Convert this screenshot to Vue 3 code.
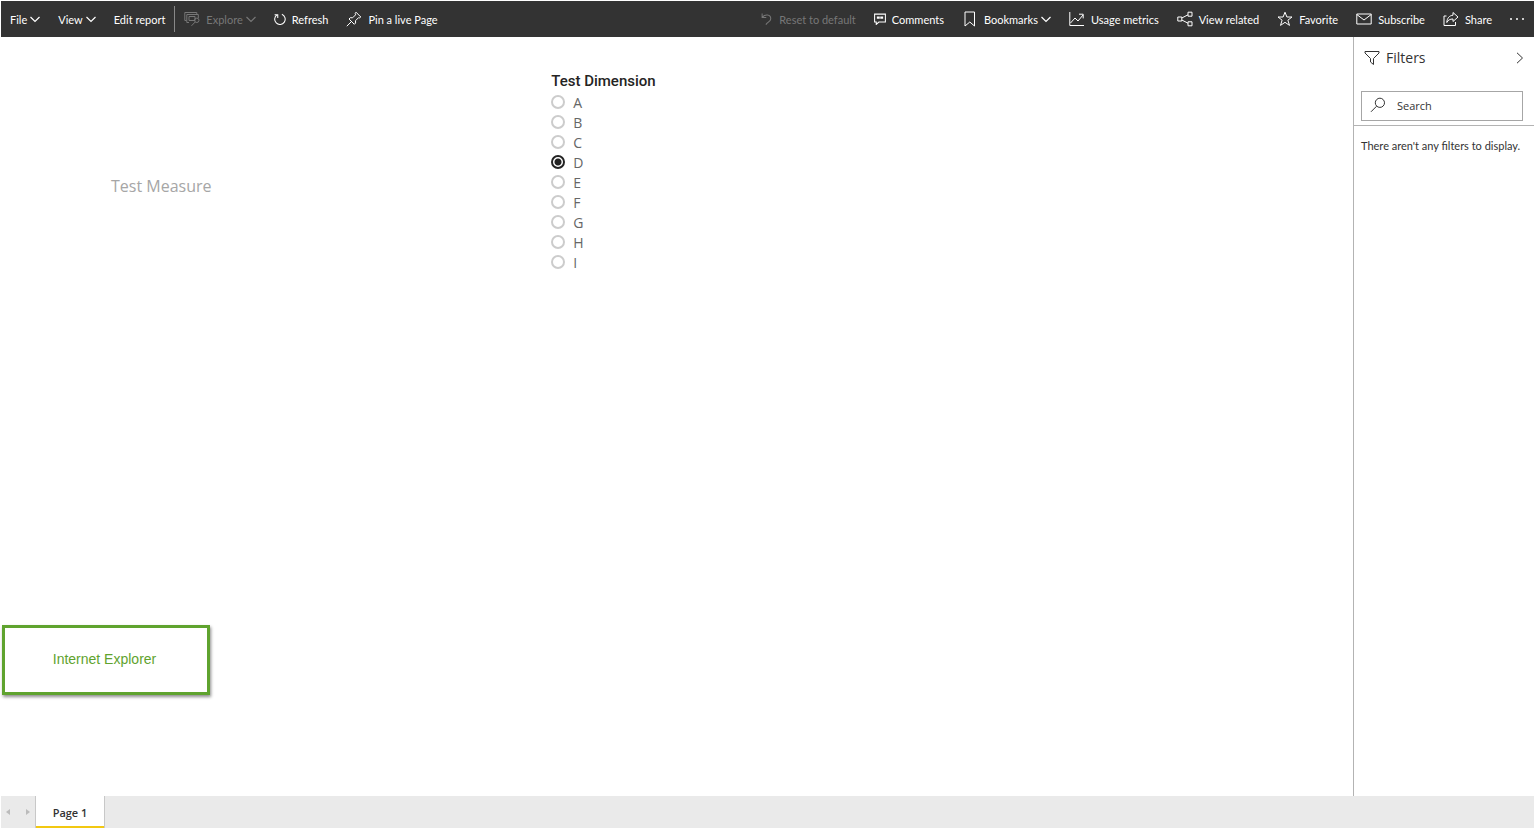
<template>
  <div class="report">
    <header class="toolbar">
      <div class="group">
        <button type="button" class="cmd">
          File
          <svg class="chevron" viewBox="0 0 10 10"><path d="M.5 3 5 7.5 9.500 3" /></svg>
        </button>
        <button type="button" class="cmd">
          View
          <svg class="chevron" viewBox="0 0 10 10"><path d="M.5 3 5 7.5 9.500 3" /></svg>
        </button>
        <button type="button" class="cmd">Edit report</button>
        <span class="divider"></span>
        <button
          v-for="item in leftItems"
          :key="item.label"
          type="button"
          class="cmd"
          :disabled="item.disabled"
        >
          <svg :class="['icon', { small: item.small }]" viewBox="0 0 16 16"><path :d="item.icon" /></svg>
          <span>{{ item.label }}</span>
          <svg v-if="item.menu" class="chevron" viewBox="0 0 10 10"><path d="M.5 3 5 7.5 9.500 3" /></svg>
        </button>
      </div>

      <div class="group">
        <button
          v-for="item in rightItems"
          :key="item.label"
          type="button"
          class="cmd"
          :disabled="item.disabled"
        >
          <svg :class="['icon', { small: item.small }]" viewBox="0 0 16 16"><path :d="item.icon" /></svg>
          <span>{{ item.label }}</span>
          <svg v-if="item.menu" class="chevron" viewBox="0 0 10 10"><path d="M.5 3 5 7.5 9.500 3" /></svg>
        </button>
        <button type="button" class="cmd" aria-label="More options">
          <svg class="dots" viewBox="0 0 14 4">
            <circle cx="1" cy="2" r="1" />
            <circle cx="7" cy="2" r="1" />
            <circle cx="13" cy="2" r="1" />
          </svg>
        </button>
      </div>
    </header>

    <div class="body">
      <main class="canvas">
        <div class="column">
          <div class="measure">Test Measure</div>
          <button type="button" class="browser">Internet Explorer</button>
        </div>

        <fieldset class="slicer">
          <legend>Test Dimension</legend>
          <label v-for="option in options" :key="option" class="option">
            <input v-model="selected" type="radio" name="dimension" :value="option" />
            {{ option }}
          </label>
        </fieldset>
      </main>

      <aside class="filters">
        <div class="filters-head">
          <svg class="funnel" viewBox="0 0 16 16"><path d="M1 1.500h14v1.500L9.500 8.500v6L6.500 12v-3.500L1 3z" /></svg>
          <h2>Filters</h2>
          <button type="button" class="collapse" aria-label="Collapse filters">
            <svg viewBox="0 0 8 12"><path d="M1 .8 6.500 6 1 11.200" /></svg>
          </button>
        </div>
        <div class="search-row">
          <label class="search">
            <svg viewBox="0 0 16 16"><path d="M14.500 5.800a4.600 4.600 0 1 1-9.200 0 4.600 4.600 0 0 1 9.200 0zM6.600 9.200 1 14.800" /></svg>
            <input v-model="query" type="text" placeholder="Search" aria-label="Search" />
          </label>
        </div>
        <p class="empty">There aren't any filters to display.</p>
      </aside>
    </div>

    <footer class="pages">
      <button type="button" class="arrow" aria-label="Previous page">
        <svg viewBox="0 0 4 6"><path d="M4 0v6L0 3z" /></svg>
      </button>
      <button type="button" class="arrow" aria-label="Next page">
        <svg viewBox="0 0 4 6"><path d="M0 0v6l4-3z" /></svg>
      </button>
      <button type="button" class="tab">Page 1</button>
    </footer>
  </div>
</template>

<script setup>
import { ref } from 'vue';

const leftItems = [
  {
    label: 'Explore',
    menu: true,
    disabled: true,
    icon: 'M2.500 9.500H.8V1.500h12v2M2.800 3.500h11.500v3.500M5 11.500H2.800v-8M5 5.500h6v4H5zM15 9.300a2.200 2.200 0 1 1-4.400 0 2.200 2.200 0 0 1 4.400 0zM11.200 11 7.500 14.800',
  },
  {
    label: 'Refresh',
    small: true,
    icon: 'M10.500 1.800A7 7 0 1 1 4 2.500M.8 2.200H5v4.300',
  },
  {
    label: 'Pin a live Page',
    icon: 'M10 1.200 14.800 6l-1.300.9-1-.2-3 3 .1 2.300-1.300 1.300L3 8l1.300-1.300 2.300.1 3-3-.4-1.300zM5.500 10.500.8 15.200',
  },
];

const rightItems = [
  {
    label: 'Reset to default',
    small: true,
    disabled: true,
    icon: 'M1.500.5v5.500H7M1.700 5.800C5 1.500 13 1.500 13 7.500c0 3.500-4 4.500-6.500 8',
  },
  {
    label: 'Comments',
    small: true,
    icon: 'M.8 1.500h14.400v10.500H6.500L3 15.200v-3.200H.8zM4.500 5.500h2.500v1.500H4.500zM9 5.500h2.500v1.500H9z',
  },
  {
    label: 'Bookmarks',
    menu: true,
    icon: 'M3 1h9.500v14L7.800 11 3 15z',
  },
  {
    label: 'Usage metrics',
    icon: 'M.8 1v13.500H15M1.500 12 6 7l3 3 5-6M10 3.200h4.200v4.200',
  },
  {
    label: 'View related',
    icon: 'M.8 6h4v4h-4zM11 1.200h4v4h-4zM11 10.800h4v4h-4zM4.800 7 11 3.800M4.800 9l6.200 3.200',
  },
  {
    label: 'Favorite',
    icon: 'M8 1.200 9.900 6h5.100l-4.100 3.200 1.600 5.200L8 11.300l-4.500 3.100 1.600-5.200L1 6h5.100z',
  },
  {
    label: 'Subscribe',
    icon: 'M.8 3h14.400v10H.8zM.8 3.500 8 9l7.200-5.500',
  },
  {
    label: 'Share',
    icon: 'M3.500 5H1v9.500h11.500V11M10 1.500 15 6l-5 4.500V8C7 8 5 9 3.800 11.500 4 7 6.500 4.500 10 4.200z',
  },
];

const options = ['A', 'B', 'C', 'D', 'E', 'F', 'G', 'H', 'I'];
const selected = ref('D');
const query = ref('');
</script>

<style>
body {
  margin: 0;
  background: #fff;
}
</style>

<style scoped>
.report {
  box-sizing: border-box;
  display: flex;
  flex-direction: column;
  min-height: 100vh;
  padding: 1px 2px 1px 1px;
  font-family: "Open Sans", "Noto Sans", sans-serif;
  font-size: 11px;
  color: #333;
}

button {
  margin: 0;
  padding: 0;
  border: 0;
  background: none;
  color: inherit;
  font: inherit;
  cursor: pointer;
}

svg {
  display: block;
  flex: none;
  fill: none;
  stroke: currentColor;
}

/* Top command bar */
.toolbar {
  display: flex;
  justify-content: space-between;
  height: 36px;
  padding-right: 1px;
  background: #333;
  color: #fff;
  font-family: Lato, "Open Sans", sans-serif;
}

.group {
  display: flex;
  align-items: center;
}

.cmd {
  display: flex;
  align-items: center;
  height: 36px;
  padding: 0 9px;
  white-space: nowrap;
}

.cmd:disabled {
  color: #777;
  cursor: default;
}

.icon {
  width: 16px;
  height: 16px;
  margin-right: 6px;
}

.icon.small {
  width: 12px;
  height: 12px;
  stroke-width: 1.4;
}

.chevron {
  width: 10px;
  height: 10px;
  margin-left: 3px;
  stroke-width: 1.2;
}

.divider {
  width: 1px;
  height: 26px;
  background: #888;
}

.dots {
  width: 14px;
  height: 4px;
  fill: currentColor;
  stroke: none;
}

/* Canvas */
.body {
  display: flex;
  flex: 1;
}

.canvas {
  display: grid;
  flex: 1;
  grid-template-columns: 40.7% 1fr;
}

.column {
  display: flex;
  flex-direction: column;
  align-items: flex-start;
  justify-content: space-between;
  padding: 137px 0 101px 1px;
}

.measure {
  padding-left: 109px;
  font-size: 16px;
  line-height: 24px;
  color: #a6a6a6;
}

.browser {
  width: 208px;
  height: 70px;
  padding: 0 3px 3px 0;
  border: 3px solid #5fa32e;
  box-shadow: 1px 2px 3px rgba(0, 0, 0, 0.45);
  color: #5fa32e;
  font-family: "Liberation Sans", Arial, sans-serif;
  font-size: 14px;
}

.slicer {
  min-width: 0;
  margin: 0;
  padding: 34px 0 0;
  border: 0;
  color: #666;
}

.slicer legend {
  float: left;
  width: 100%;
  margin-bottom: 1px;
  padding: 0;
  font-family: Roboto, sans-serif;
  font-size: 15px;
  font-weight: 500;
  line-height: 20px;
  color: #252423;
}

.option {
  display: flex;
  clear: both;
  align-items: center;
  height: 20px;
  gap: 8px;
  font-size: 14px;
}

.option input {
  appearance: none;
  box-sizing: border-box;
  width: 14px;
  height: 14px;
  margin: 0;
  border: 2px solid #ccc;
  border-radius: 50%;
}

.option input:checked {
  border-color: #222;
  background: radial-gradient(circle, #222 0 3px, #fff 4px);
}

/* Filter pane */
.filters {
  width: 180px;
  border-left: 1px solid #b3b3b3;
}

.filters-head {
  display: flex;
  align-items: center;
  height: 41px;
  padding: 0 10px;
}

.funnel {
  width: 16px;
  height: 16px;
}

.filters h2 {
  flex: 1;
  margin: 0 0 0 6px;
  font-size: 14px;
  font-weight: 400;
}

.collapse svg {
  width: 8px;
  height: 12px;
}

.search-row {
  padding: 13px 11px 4px 7px;
  border-bottom: 1px solid #b3b3b3;
}

.search {
  display: flex;
  box-sizing: border-box;
  align-items: center;
  height: 30px;
  padding: 0 8px 2px;
  border: 1px solid #a6a6a6;
}

.search svg {
  width: 16px;
  height: 16px;
}

.search input {
  flex: 1;
  min-width: 0;
  margin-left: 11px;
  padding: 0;
  border: 0;
  outline: 0;
  background: none;
  color: #333;
  font: inherit;
}

.search input::placeholder {
  color: #333;
  opacity: 1;
}

.empty {
  margin: 12px 0 0 7px;
  font-family: Lato, "Open Sans", sans-serif;
  line-height: 16px;
}

/* Page tabs */
.pages {
  display: flex;
  height: 32px;
  background: #eaeaea;
}

.arrow {
  display: flex;
  align-items: center;
  justify-content: center;
  width: 14px;
  color: #bbb;
}

.arrow + .arrow {
  margin-left: 6px;
}

.arrow svg {
  width: 4px;
  height: 6px;
  fill: currentColor;
  stroke: none;
}

.tab {
  min-width: 70px;
  border: solid #c8c8c8;
  border-width: 0 1px;
  background: #fff;
  box-shadow: inset 0 -2px #f2c811;
  font-weight: 600;
}
</style>
